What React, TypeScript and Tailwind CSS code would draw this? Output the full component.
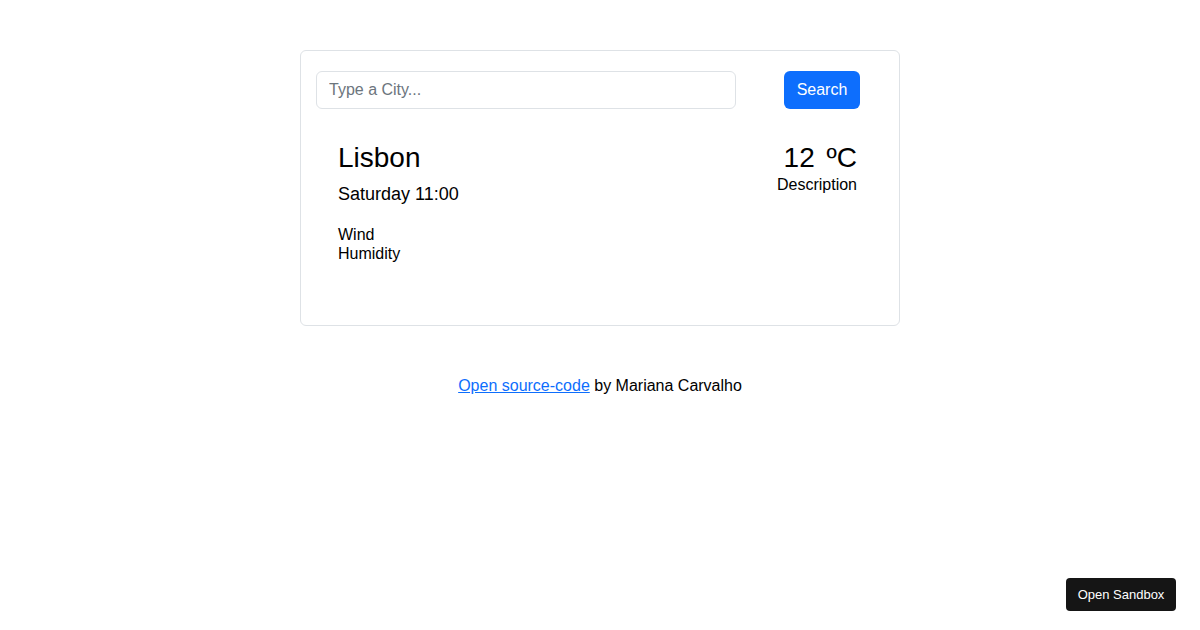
import React from "react";

export default function App() {
  return (
    <div className="relative w-[1200px] h-[630px] bg-white text-black font-['Liberation_Sans',Arial,sans-serif]">
      <div className="pt-[50px]">
        <div className="mx-auto w-[600px] h-[276px] border border-[#dee2e6] rounded-[6px] pt-[20px] px-[15px]">
          <form className="flex" onSubmit={(e) => e.preventDefault()}>
            <input
              type="search"
              placeholder="Type a City..."
              className="w-[420px] h-[38px] border border-[#dee2e6] rounded-[6px] px-[12px] text-[16px] text-[#212529] placeholder:text-[#6c757d] outline-none"
            />
            <button
              type="submit"
              className="ml-[48px] w-[76px] h-[38px] bg-[#0d6efd] text-white text-[16px] rounded-[6px]"
            >
              Search
            </button>
          </form>
          <div className="flex justify-between mt-[33px] pl-[22px] pr-[27px]">
            <div>
              <div className="text-[28px] leading-[32px]">Lisbon</div>
              <div className="text-[18px] leading-[21px] mt-[10px]">Saturday 11:00</div>
              <div className="text-[16px] leading-[19px] mt-[20px]">
                <div>Wind</div>
                <div>Humidity</div>
              </div>
            </div>
            <div className="text-right">
              <div className="text-[28px] leading-[32px]">
                12 <span className="ml-[4px]">ºC</span>
              </div>
              <div className="text-[16px] leading-[19px] mt-[1px]">Description</div>
            </div>
          </div>
        </div>
        <div className="text-center text-[16px] leading-[19px] mt-[50px]">
          <a href="#" className="text-[#0d6efd] underline">
            Open source-code
          </a>{" "}
          by Mariana Carvalho
        </div>
      </div>
      <div className="absolute right-[24px] bottom-[19px] w-[110px] h-[33px] bg-[#151515] rounded-[4px] flex items-center justify-center text-white text-[13px]">
        Open Sandbox
      </div>
    </div>
  );
}
